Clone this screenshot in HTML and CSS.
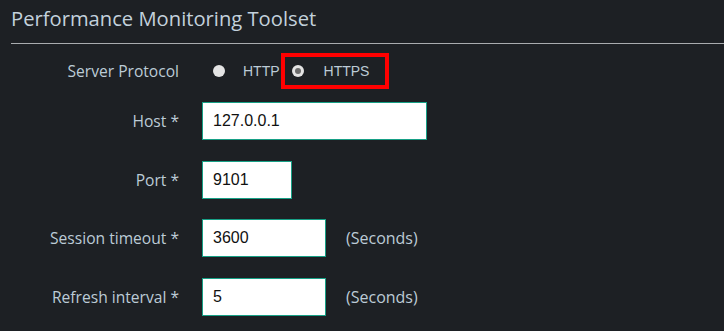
FILE: index.html
```html
<!DOCTYPE html>
<html lang="en">
<head>
  <meta charset="UTF-8">
  <title>Performance Monitoring Toolset</title>
  <link rel="stylesheet" href="styles.css">
</head>
<body>

<h1 class="title">Performance Monitoring Toolset</h1>

<div class="form">
  <div class="row radio-row">
    <label class="field-label">Server Protocol</label>
    <div class="radios">
      <span class="option">
        <span class="dot"></span>
        <span class="opt-text">HTTP</span>
      </span>
      <span class="option highlight">
        <span class="dot checked"></span>
        <span class="opt-text">HTTPS</span>
      </span>
    </div>
  </div>

  <div class="row">
    <label class="field-label">Host *</label>
    <input class="box wide" type="text" value="127.0.0.1">
  </div>

  <div class="row">
    <label class="field-label">Port *</label>
    <input class="box short" type="text" value="9101">
  </div>

  <div class="row">
    <label class="field-label">Session timeout *</label>
    <input class="box mid" type="text" value="3600">
    <span class="unit">(Seconds)</span>
  </div>

  <div class="row">
    <label class="field-label">Refresh interval *</label>
    <input class="box mid" type="text" value="5">
    <span class="unit">(Seconds)</span>
  </div>
</div>

</body>
</html>
```

FILE: styles.css
```css
body {
  margin: 0;
  background: #1d2024;
  font-family: 'Open Sans', sans-serif;
  color: #bccbd6;
}
.title {
  margin: 0 0 0 11px;
  height: 44px;
  box-sizing: border-box;
  padding-top: 4px;
  font-size: 20.2px;
  font-weight: normal;
  color: #c3d1dc;
  border-bottom: 1px solid #a9acaf;
}
.form {
  padding-top: 7px;
}
.row {
  display: flex;
  align-items: center;
  height: 58.5px;
}
.radio-row {
  height: 40px;
  margin-bottom: 1px;
}
.field-label {
  width: 179px;
  text-align: right;
  font-size: 15.6px;
  margin-right: 23px;
}
.radios {
  display: flex;
  align-items: center;
  margin-left: 11px;
  font-family: 'Liberation Sans', Arial, sans-serif;
  font-size: 14px;
}
.option {
  display: flex;
  align-items: center;
}
.option .dot {
  width: 12px;
  height: 12px;
  border-radius: 50%;
  background: #e4e4e4;
  margin-right: 18px;
  position: relative;
}
.dot.checked::after {
  content: "";
  position: absolute;
  left: 3px;
  top: 3px;
  width: 6px;
  height: 6px;
  border-radius: 50%;
  background: #6b6b6b;
}
.highlight {
  border: 4px solid #ff0000;
  height: 28px;
  padding: 0 16px 0 7px;
  margin-left: 1px;
}
.highlight .dot {
  margin-right: 20px;
}
.box {
  box-sizing: border-box;
  height: 38px;
  border: 1px solid #17a086;
  background: #fff;
  padding: 0 10px;
  font-family: 'Liberation Sans', Arial, sans-serif;
  font-size: 16px;
  color: #111;
  outline: none;
}
.wide { width: 225px; }
.short { width: 90px; }
.mid { width: 124px; }
.unit {
  margin-left: 20px;
  font-size: 16px;
}
```
